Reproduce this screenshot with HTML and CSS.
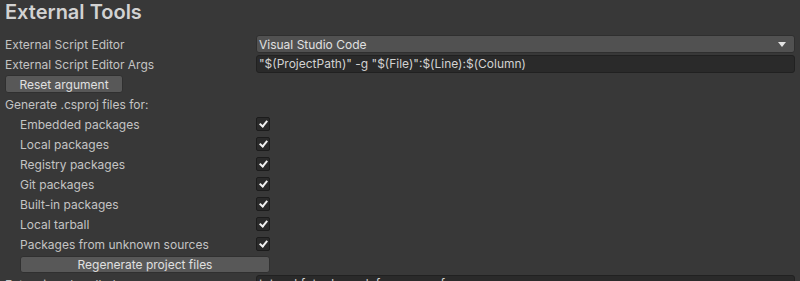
FILE: index.html
```html
<!DOCTYPE html>
<html>
    <head>
        <title>External Tools</title>
        <link rel="stylesheet" href="styles.css">
    </head>
    <body>
        <div class="panel">
            <h1 class="title">External Tools</h1>

            <div class="row">
                <span class="label">External Script Editor</span>
                <div class="dropdown">
                    <span>Visual Studio Code</span>
                    <span class="arrow"></span>
                </div>
            </div>
            <div class="row">
                <span class="label">External Script Editor Args</span>
                <div class="field">"$(ProjectPath)" -g "$(File)":$(Line):$(Column)</div>
            </div>
            <div class="row">
                <button class="btn reset">Reset argument</button>
            </div>
            <div class="row">
                <span class="label">Generate .csproj files for:</span>
            </div>

            <div class="row sub"><span class="label">Embedded packages</span><span class="check"></span></div>
            <div class="row sub"><span class="label">Local packages</span><span class="check"></span></div>
            <div class="row sub"><span class="label">Registry packages</span><span class="check"></span></div>
            <div class="row sub"><span class="label">Git packages</span><span class="check"></span></div>
            <div class="row sub"><span class="label">Built-in packages</span><span class="check"></span></div>
            <div class="row sub"><span class="label">Local tarball</span><span class="check"></span></div>
            <div class="row sub"><span class="label">Packages from unknown sources</span><span class="check"></span></div>

            <div class="row sub">
                <button class="btn regen">Regenerate project files</button>
            </div>

            <div class="row">
                <span class="label">Extensions handled:</span>
                <div class="field">txt;xml;fnt;cd;asmdef;rsp;asmref</div>
            </div>
        </div>
    </body>
</html>
```

FILE: styles.css
```css
body {
    margin: 0;
    background-color: #383838;
    font-family: Inter, "Noto Sans", sans-serif;
    font-size: 12px;
    color: #c4c4c4;
    overflow: hidden;
}
.panel {
    padding: 0 5px;
}
.title {
    margin: 0;
    height: 34px;
    line-height: 24px;
    font-size: 20px;
    font-weight: 600;
    color: #d2d2d2;
}
.row {
    display: grid;
    grid-template-columns: 251px 1fr;
    align-items: center;
    height: 20px;
}
.row.sub {
    grid-template-columns: 236px 1fr;
    padding-left: 15px;
}
.label {
    white-space: nowrap;
}
.dropdown {
    height: 16px;
    display: flex;
    align-items: center;
    justify-content: space-between;
    padding: 0 8px 0 2px;
    background-color: #515151;
    border: 1px solid #2f2f2f;
    border-radius: 3px;
    color: #e0e0e0;
}
.arrow {
    width: 0;
    height: 0;
    border-left: 4px solid transparent;
    border-right: 4px solid transparent;
    border-top: 5px solid #e4e4e4;
}
.field {
    height: 16px;
    line-height: 16px;
    padding: 0 2px;
    background-color: #2a2a2a;
    border: 1px solid #212121;
    border-radius: 3px;
    color: #d2d2d2;
    white-space: nowrap;
    overflow: hidden;
}
.btn {
    height: 18px;
    padding: 0;
    font-family: inherit;
    font-size: 12px;
    color: #e0e0e0;
    background-color: #585858;
    border: 1px solid #303030;
    border-radius: 3px;
}
.reset {
    width: 118px;
}
.regen {
    grid-column: 1 / 3;
    width: 250px;
    height: 17px;
}
.check {
    position: relative;
    width: 12px;
    height: 12px;
    background-color: #2a2a2a;
    border: 1px solid #1c1c1c;
    border-radius: 2px;
}
.check::after {
    content: "";
    position: absolute;
    left: 4px;
    top: 1px;
    width: 3px;
    height: 6px;
    border-right: 2px solid #f0f0f0;
    border-bottom: 2px solid #f0f0f0;
    transform: rotate(40deg);
}
```
